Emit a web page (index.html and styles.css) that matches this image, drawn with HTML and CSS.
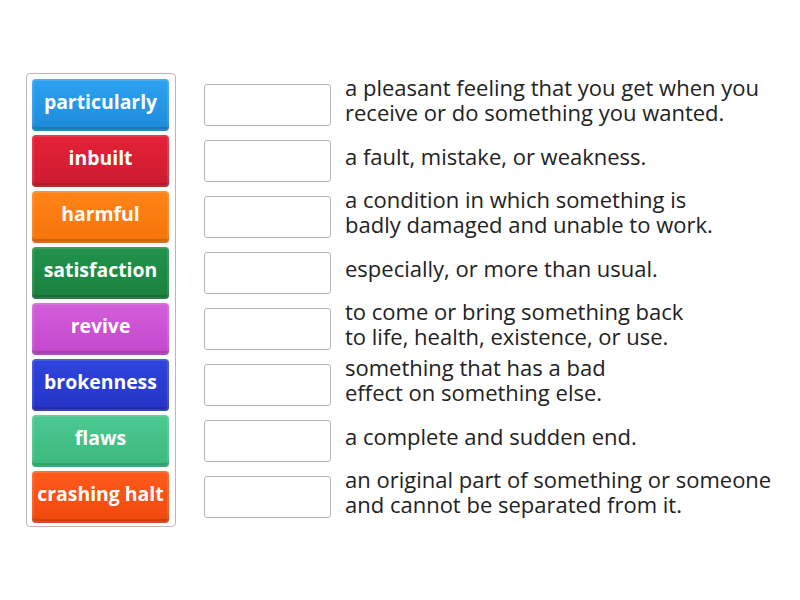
FILE: index.html
```html
<!DOCTYPE html>
<html>
<head>
<meta charset="utf-8">
<link rel="stylesheet" href="styles.css">
</head>
<body>
<div class="game">
  <div class="bank">
    <div class="tile blue">particularly</div>
    <div class="tile red">inbuilt</div>
    <div class="tile orange">harmful</div>
    <div class="tile green">satisfaction</div>
    <div class="tile purple">revive</div>
    <div class="tile navy">brokenness</div>
    <div class="tile mint">flaws</div>
    <div class="tile vermilion">crashing halt</div>
  </div>
  <div class="rows">
    <div class="row"><div class="slot"></div><div class="def">a pleasant feeling that you get when you<br>receive or do something you wanted.</div></div>
    <div class="row"><div class="slot"></div><div class="def">a fault, mistake, or weakness.</div></div>
    <div class="row"><div class="slot"></div><div class="def">a condition in which something is<br>badly damaged and unable to work.</div></div>
    <div class="row"><div class="slot"></div><div class="def">especially, or more than usual.</div></div>
    <div class="row"><div class="slot"></div><div class="def">to come or bring something back<br>to life, health, existence, or use.</div></div>
    <div class="row"><div class="slot"></div><div class="def">something that has a bad<br>effect on something else.</div></div>
    <div class="row"><div class="slot"></div><div class="def">a complete and sudden end.</div></div>
    <div class="row"><div class="slot"></div><div class="def">an original part of something or someone<br>and cannot be separated from it.</div></div>
  </div>
</div>
</body>
</html>
```
FILE: styles.css
```css
html, body {
  margin: 0;
  padding: 0;
  background: #ffffff;
}
body {
  font-family: "Open Sans", "Liberation Sans", sans-serif;
}
.game {
  display: flex;
  align-items: flex-start;
  padding: 73px 0 0 26px;
}
.bank {
  display: flex;
  flex-direction: column;
  gap: 4px;
  padding: 5px 6px 3px 5px;
  border: 1px solid #b8b8b8;
  border-radius: 4px;
  width: 137px;
}
.tile {
  height: 52px;
  box-sizing: border-box;
  border-radius: 4px;
  display: flex;
  align-items: center;
  justify-content: center;
  color: #ffffff;
  font-weight: 700;
  font-size: 19.4px;
  white-space: nowrap;
  padding-bottom: 7px;
  box-shadow: inset 0 -4px 0 rgba(0,0,0,0.14), inset 0 0 0 2px rgba(255,255,255,0.12);
}
.blue { background: linear-gradient(#2da2f2, #1d8ad8); }
.red { background: linear-gradient(#e42238, #cc1b30); }
.orange { background: linear-gradient(#ff8418, #f5730b); }
.green { background: linear-gradient(#21924b, #1b803f); }
.purple { background: linear-gradient(#d35fdb, #c446cc); }
.navy { background: linear-gradient(#2f45de, #2434c6); }
.mint { background: linear-gradient(#4cc991, #3db87f); }
.vermilion { background: linear-gradient(#ff5b1d, #f0480c); }
.rows {
  display: flex;
  flex-direction: column;
  margin-left: 28px;
  padding-top: 4px;
}
.row {
  height: 56px;
  display: flex;
  align-items: center;
}
.slot {
  width: 127px;
  height: 42px;
  box-sizing: border-box;
  border: 1px solid #b5b5b5;
  border-radius: 3px;
  background: #ffffff;
  flex: none;
}
.def {
  margin-left: 14px;
  margin-bottom: 10px;
  font-size: 22px;
  line-height: 25px;
  color: #222222;
  white-space: nowrap;
}
```
